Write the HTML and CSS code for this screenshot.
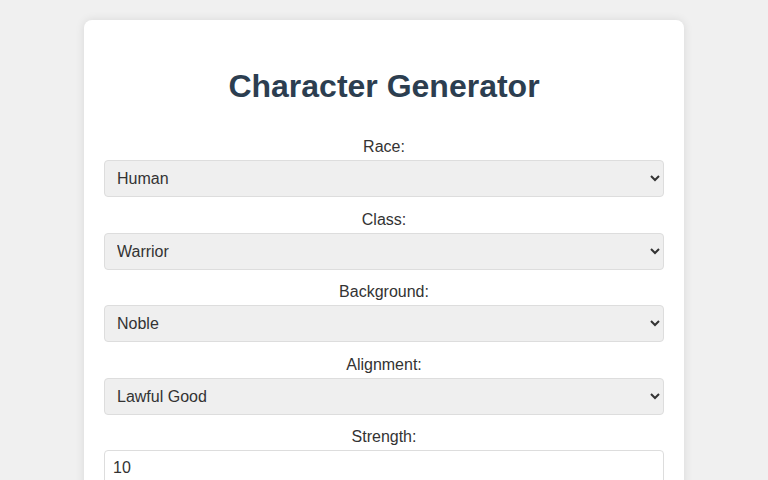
FILE: index.html
```html
<!DOCTYPE html>
<html lang="en">
<head>
<meta charset="utf-8">
<title>Character Generator</title>
<link rel="stylesheet" href="styles.css">
</head>
<body>
<div class="card">
  <h1 class="title">Character Generator</h1>
  <form class="form">
    <div class="group">
      <label class="label" for="race">Race:</label>
      <select class="field select" id="race">
        <option>Human</option><option>Elf</option><option>Dwarf</option><option>Orc</option>
      </select>
    </div>
    <div class="group">
      <label class="label" for="class">Class:</label>
      <select class="field select" id="class">
        <option>Warrior</option><option>Mage</option><option>Rogue</option><option>Cleric</option>
      </select>
    </div>
    <div class="group">
      <label class="label" for="background">Background:</label>
      <select class="field select" id="background">
        <option>Noble</option><option>Soldier</option><option>Criminal</option><option>Sage</option>
      </select>
    </div>
    <div class="group">
      <label class="label" for="alignment">Alignment:</label>
      <select class="field select" id="alignment">
        <option>Lawful Good</option><option>Neutral Good</option><option>Chaotic Good</option><option>True Neutral</option>
      </select>
    </div>
    <div class="group">
      <label class="label" for="strength">Strength:</label>
      <input class="field input" id="strength" type="number" value="10">
    </div>
    <div class="group">
      <label class="label" for="dexterity">Dexterity:</label>
      <input class="field input" id="dexterity" type="number" value="10">
    </div>
  </form>
</div>
</body>
</html>
```

FILE: styles.css
```css
html, body {
  margin: 0;
  padding: 0;
}
body {
  background: #f0f0f0;
  font-family: "Liberation Sans", Arial, sans-serif;
  color: #333;
}
.card {
  width: 560px;
  margin: 20px auto 0;
  padding: 20px;
  background: #fff;
  border-radius: 8px;
  box-shadow: 0 0 10px rgba(0, 0, 0, 0.1);
}
.title {
  margin: 28px 0 33px;
  font-size: 32px;
  font-weight: bold;
  text-align: center;
  color: #2c3e50;
  line-height: normal;
}
.form {
  margin: 0;
}
.group {
  margin-bottom: 13.5px;
  text-align: center;
}
.label {
  display: block;
  margin-bottom: 4px;
  font-size: 16px;
  color: #333;
}
.field {
  display: block;
  box-sizing: border-box;
  width: 100%;
  margin: 0;
  padding: 8px;
  font-family: "Liberation Sans", Arial, sans-serif;
  font-size: 16px;
  color: #333;
  border: 1px solid #ddd;
  border-radius: 4px;
  text-align: left;
}
.select {
  background-color: #efefef;
}
.input {
  background-color: #fff;
}
```
